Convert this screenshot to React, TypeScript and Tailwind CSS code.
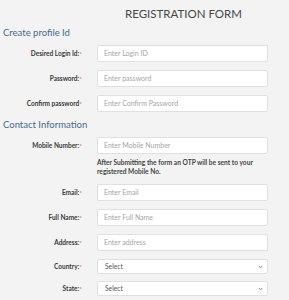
import React from "react";

const Label = ({ text }: { text: string }) => (
  <div className="w-[97px] shrink-0 pr-[15px] text-right text-[6.5px] font-bold leading-[17px] text-[#3a3a3a]">
    {text}
    <span className="text-[#e74c3c] font-normal">*</span>
  </div>
);

const Input = ({ label, ph, mt }: { label: string; ph: string; mt: string }) => (
  <div className={`flex h-[17px] items-center ${mt}`}>
    <Label text={label} />
    <div className="flex h-[17px] w-[171px] items-center rounded-[2px] border border-[#e0e0e0] bg-white pl-[6px] text-[7px] text-[#a5a5a5]">
      {ph}
    </div>
  </div>
);

const Select = ({ label, mt }: { label: string; mt: string }) => (
  <div className={`flex h-[15px] items-center ${mt}`}>
    <Label text={label} />
    <div className="flex h-[15px] w-[171px] items-center justify-between rounded-[2px] border border-[#e0e0e0] bg-white pl-[7px] pr-[4px] text-[6.7px] text-[#555]">
      <span>Select</span>
      <svg width="5" height="4" viewBox="0 0 5 4" fill="none">
        <path d="M0.7 0.9 L2.5 2.8 L4.3 0.9" stroke="#777" strokeWidth="0.9" />
      </svg>
    </div>
  </div>
);

export default function App() {
  return (
    <div
      className="h-[300px] w-[289px] overflow-hidden bg-[#f3f3f3] pt-[7px]"
      style={{ fontFamily: "Lato, 'Open Sans', sans-serif" }}
    >
      <div className="h-[14px] pl-[125px] text-[11.5px] leading-[14px] text-[#474747]">REGISTRATION FORM</div>
      <div className="mt-[5px] h-[13px] pl-[3px] text-[9.5px] leading-[13px] text-[#4a6a8c]">Create profile Id</div>
      <Input label="Desired Login Id:" ph="Enter Login ID" mt="mt-[6px]" />
      <Input label="Password:" ph="Enter password" mt="mt-[8px]" />
      <Input label="Confirm password" ph="Enter Confirm Password" mt="mt-[8px]" />
      <div className="mt-[6px] h-[13px] pl-[3px] text-[9.5px] leading-[13px] text-[#4a6a8c]">Contact Information</div>
      <Input label="Mobile Number:" ph="Enter Mobile Number" mt="mt-[6px]" />
      <div className="mt-[4px] pl-[97px] text-[6.6px] font-bold leading-[9px] text-[#444]">
        After Submitting the form an OTP will be sent to your
        <br />
        registered Mobile No.
      </div>
      <Input label="Email:" ph="Enter Email" mt="mt-[8px]" />
      <Input label="Full Name:" ph="Enter Full Name" mt="mt-[8px]" />
      <Input label="Address:" ph="Enter address" mt="mt-[8px]" />
      <Select label="Country:" mt="mt-[8px]" />
      <Select label="State:" mt="mt-[7px]" />
    </div>
  );
}
